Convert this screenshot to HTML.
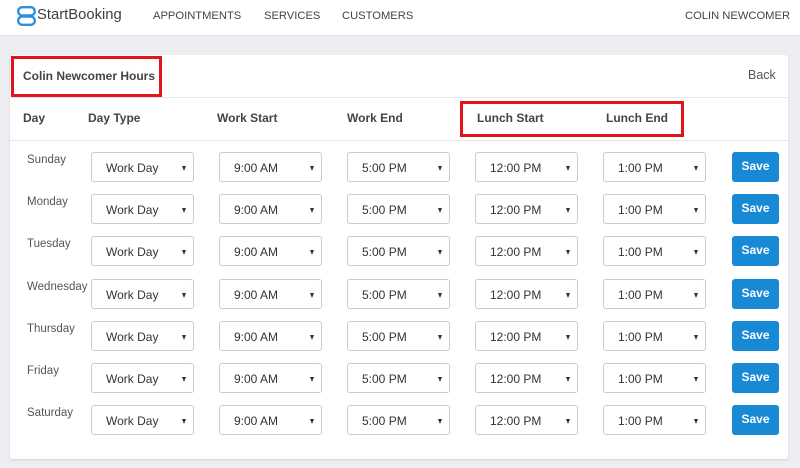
<!DOCTYPE html>
<html><head><meta charset="utf-8"><style>
*{box-sizing:border-box;margin:0;padding:0}
body{width:800px;height:468px;background:#eceef2;font-family:"Liberation Sans",sans-serif;color:#333;position:relative;overflow:hidden}
.hdr{position:absolute;left:0;top:0;width:800px;height:36px;background:#fff;border-bottom:1px solid #e2e4e8}
.t{position:absolute;white-space:nowrap}
.nav{font-size:11.2px;color:#444;top:10px}
.card{position:absolute;left:10px;top:55px;width:778px;height:404px;background:#fff;border-radius:3px;box-shadow:0 1px 2px rgba(0,0,0,.12)}
.line{position:absolute;height:1px;background:#e6e6e6}
.th{font-size:12px;font-weight:bold;color:#444;top:111px}
.day{font-size:11.5px;color:#555}
.sel{position:absolute;width:103px;height:30px;border:1px solid #ccc;border-radius:3px;background:#fff;font-size:12px;color:#333;padding:8px 0 0 14px}
.sel:after{content:"";position:absolute;right:7px;top:13px;border-left:2.5px solid transparent;border-right:2.5px solid transparent;border-top:5px solid #333}
.save{position:absolute;width:47px;height:30px;background:#1889d4;color:#fff;border-radius:3px;font-size:12px;font-weight:bold;text-align:center;line-height:29px}
.red{position:absolute;border:3px solid #e0141b}
</style></head><body>
<div class="hdr"></div>
<svg style="position:absolute;left:17px;top:6px" width="19" height="20" viewBox="0 0 19 20"><rect x="1.2" y="1.2" width="16.6" height="8.3" rx="4.1" fill="none" stroke="#2f8fd8" stroke-width="2.4"/><rect x="1.2" y="10.5" width="16.6" height="8.3" rx="4.1" fill="none" stroke="#2f8fd8" stroke-width="2.4"/></svg>
<div class="t" style="left:37px;top:7px;font-size:14.8px;color:#3a3f4a">StartBooking</div>
<div class="t nav" style="left:153px">APPOINTMENTS</div>
<div class="t nav" style="left:264px">SERVICES</div>
<div class="t nav" style="left:342px">CUSTOMERS</div>
<div class="t nav" style="left:685px">COLIN NEWCOMER</div>
<div class="card"></div>
<div class="line" style="left:10px;top:97px;width:778px"></div>
<div class="line" style="left:10px;top:140px;width:778px"></div>
<div class="t" style="left:23px;top:69px;font-size:12px;font-weight:bold;color:#444">Colin Newcomer Hours</div>
<div class="t" style="left:748px;top:68px;font-size:12.5px;color:#555">Back</div>
<div class="red" style="left:11px;top:56px;width:151px;height:41px"></div>
<div class="t th" style="left:23px">Day</div>
<div class="t th" style="left:88px">Day Type</div>
<div class="t th" style="left:217px">Work Start</div>
<div class="t th" style="left:347px">Work End</div>
<div class="t th" style="left:477px">Lunch Start</div>
<div class="t th" style="left:606px">Lunch End</div>
<div class="red" style="left:460px;top:101px;width:224px;height:36px"></div>
<div id="rows"></div>
<script>
var d=["Sunday","Monday","Tuesday","Wednesday","Thursday","Friday","Saturday"],h="";
d.forEach(function(n,i){var y=152+i*42.2;
h+='<div class="t day" style="left:27px;top:'+(y+2)+'px">'+n+'</div>';
[[91,"Work Day"],[219,"9:00 AM"],[347,"5:00 PM"],[475,"12:00 PM"],[603,"1:00 PM"]].forEach(function(s){h+='<div class="sel" style="left:'+s[0]+'px;top:'+y+'px">'+s[1]+'</div>'});
h+='<div class="save" style="left:732px;top:'+y+'px">Save</div>';});
document.getElementById("rows").innerHTML=h;
</script>
</body></html>
